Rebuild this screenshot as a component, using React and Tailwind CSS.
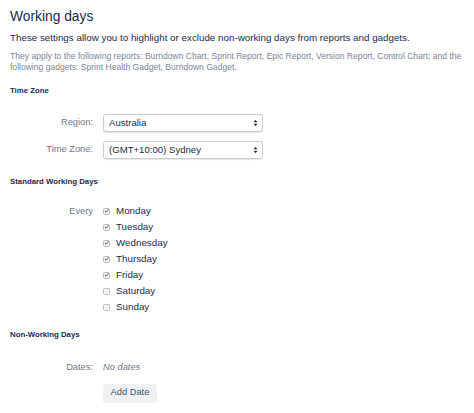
import React from "react";

const days = [
  ["Monday", true],
  ["Tuesday", true],
  ["Wednesday", true],
  ["Thursday", true],
  ["Friday", true],
  ["Saturday", false],
  ["Sunday", false],
];

function Check({ checked }) {
  return (
    <span className="inline-flex h-[7px] w-[7px] items-center justify-center rounded-[1.5px] border border-[#b9bcc2] bg-[#f4f4f4]">
      {checked && (
        <svg viewBox="0 0 8 8" className="h-[6px] w-[6px]">
          <path d="M1.3 4.2 L3.2 6 L6.8 1.6" fill="none" stroke="#333" strokeWidth="1.3" />
        </svg>
      )}
    </span>
  );
}

function Select({ value }) {
  return (
    <div className="flex h-[18px] w-[160px] items-center justify-between rounded-[3px] border border-[#c9ccd1] bg-white pl-[5px] pr-[4px] shadow-[0_0.5px_1px_rgba(0,0,0,0.1)]">
      <span className="text-[9.6px] text-[#172b4d]">{value}</span>
      <svg viewBox="0 0 6 10" className="h-[8px] w-[5px]">
        <path d="M0.5 4 L3 1 L5.5 4 Z M0.5 6 L3 9 L5.5 6 Z" fill="#333" />
      </svg>
    </div>
  );
}

export default function App() {
  return (
    <div className="h-[413px] w-[474px] bg-white px-[10px] pt-[9px] text-[#172b4d]" style={{ fontFamily: '"Liberation Sans", Arial, sans-serif' }}>
      <h1 className="text-[13.8px] leading-[16px] font-normal text-[#172b4d]">Working days</h1>
      <p className="mt-[7px] text-[9.8px] leading-[12px] text-[#172b4d]">
        These settings allow you to highlight or exclude non-working days from reports and gadgets.
      </p>
      <p className="mt-[7px] text-[8.55px] leading-[11px] text-[#7a869a]">
        They apply to the following reports: Burndown Chart, Sprint Report, Epic Report, Version Report, Control Chart; and the following gadgets: Sprint Health Gadget, Burndown Gadget.
      </p>

      <h2 className="mt-[13px] text-[7.8px] leading-[10px] font-bold text-[#172b4d]">Time Zone</h2>
      <div className="mt-[18px] flex flex-col gap-[9px]">
        <div className="flex items-center">
          <span className="w-[83px] text-right text-[9.3px] text-[#6b778c]">Region:</span>
          <div className="ml-[10px]"><Select value="Australia" /></div>
        </div>
        <div className="flex items-center">
          <span className="w-[83px] text-right text-[9.3px] text-[#6b778c]">Time Zone:</span>
          <div className="ml-[10px]"><Select value="(GMT+10:00) Sydney" /></div>
        </div>
      </div>

      <h2 className="mt-[18px] text-[7.8px] leading-[10px] font-bold text-[#172b4d]">Standard Working Days</h2>
      <div className="mt-[16px] flex">
        <span className="w-[83px] text-right text-[9.3px] leading-[16px] text-[#6b778c]">Every</span>
        <div className="ml-[10px] flex flex-col">
          {days.map(([d, c]) => (
            <label key={d} className="flex h-[16px] items-center gap-[6px] text-[9.8px] text-[#172b4d]">
              <Check checked={c} />
              <span>{d}</span>
            </label>
          ))}
        </div>
      </div>

      <h2 className="mt-[15px] text-[7.8px] leading-[10px] font-bold text-[#172b4d]">Non-Working Days</h2>
      <div className="mt-[21px] flex items-center">
        <span className="w-[83px] text-right text-[9.3px] text-[#6b778c]">Dates:</span>
        <span className="ml-[10px] text-[9.3px] italic text-[#6b778c]">No dates</span>
      </div>
      <button className="ml-[93px] mt-[9px] flex h-[19px] w-[54px] items-center justify-center rounded-[2px] bg-[#f0f1f3] text-[9.3px] text-[#42526e]">
        Add Date
      </button>
    </div>
  );
}
